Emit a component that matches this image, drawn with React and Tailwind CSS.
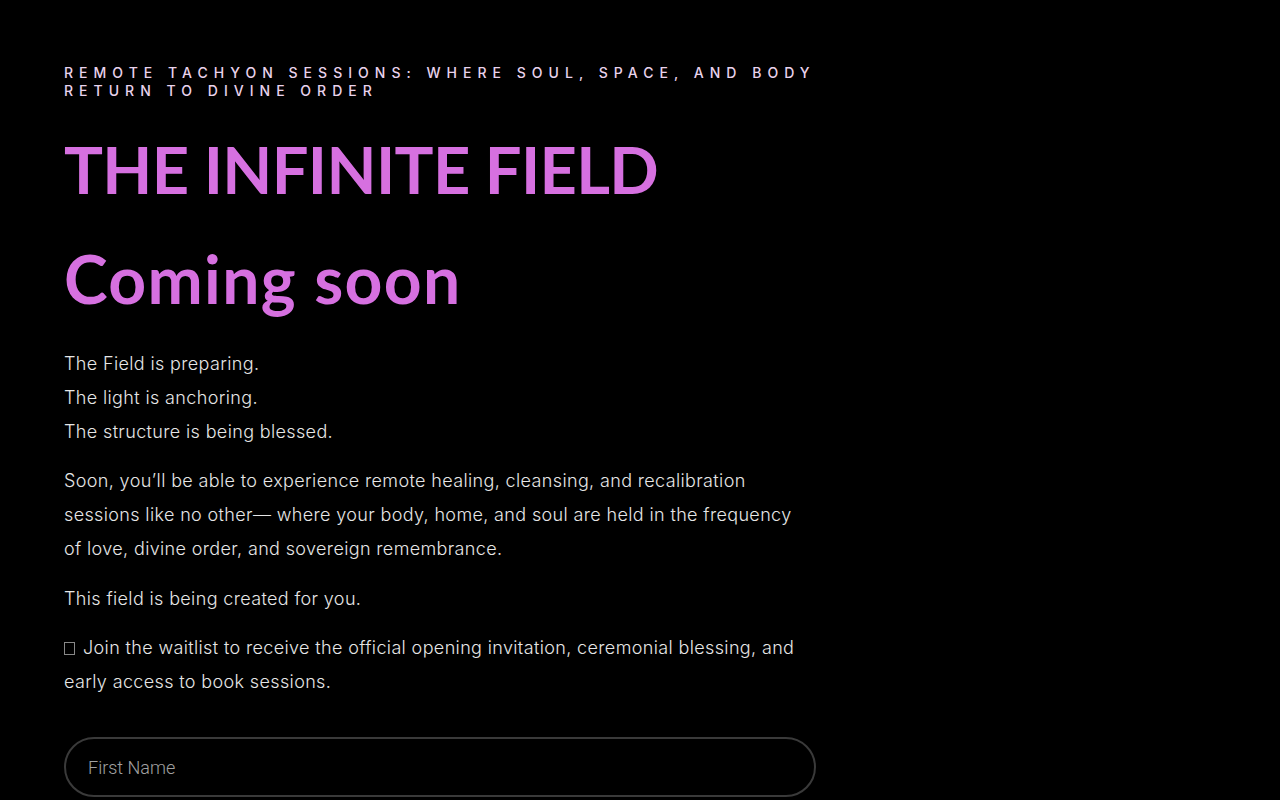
import React from 'react';

const App = () => {
  return (
    <div className="min-h-screen bg-black px-16 pt-[64px] pb-20">
      <div className="w-[752px]">
        <p className="text-[14px] leading-[18px] tracking-[0.43em] font-medium uppercase text-[#e9d3ec] whitespace-nowrap" style={{ fontFamily: 'Inter, sans-serif' }}>
          Remote Tachyon Sessions: Where Soul, Space, and Body
          <br />
          Return to Divine Order
        </p>

        <h1 className="mt-[29px] text-[65px] leading-[80px] font-bold tracking-[-0.01em] text-[#d670e0]" style={{ fontFamily: 'Lato, sans-serif' }}>
          THE INFINITE FIELD
        </h1>
        <h2 className="mt-[30px] text-[66px] leading-[80px] font-bold tracking-[0.02em] text-[#d670e0]" style={{ fontFamily: 'Lato, sans-serif' }}>
          Coming soon
        </h2>

        <div className="mt-[28px] w-[740px] text-[18px] leading-[34px] font-light tracking-[0.02em] text-[#e6e6e6]" style={{ fontFamily: 'Inter, sans-serif' }}>
          <p>The Field is preparing.</p>
          <p>The light is anchoring.</p>
          <p>The structure is being blessed.</p>

          <p className="mt-[15px]">
            Soon, you’ll be able to experience remote healing, cleansing, and recalibration sessions like no other— where your body, home, and soul are held in the frequency of love, divine order, and sovereign remembrance.
          </p>

          <p className="mt-[16px]">This field is being created for you.</p>

          <p className="mt-[15px]">
            <span className="inline-block w-[11px] h-[13px] border border-[#888] align-[-1px] mr-2"></span>
            Join the waitlist to receive the official opening invitation, ceremonial blessing, and early access to book sessions.
          </p>
        </div>

        <form className="mt-[38px]" onSubmit={(e) => e.preventDefault()}>
          <input
            type="text"
            placeholder="First Name"
            className="w-full h-[60px] rounded-full border-2 border-[#3a3a3a] bg-black px-[22px] text-[18px] text-white placeholder:text-[#a0a0a0] outline-none"
            style={{ fontFamily: 'Roboto, sans-serif', fontWeight: 300 }}
          />
        </form>
      </div>
    </div>
  );
};

export default App;
